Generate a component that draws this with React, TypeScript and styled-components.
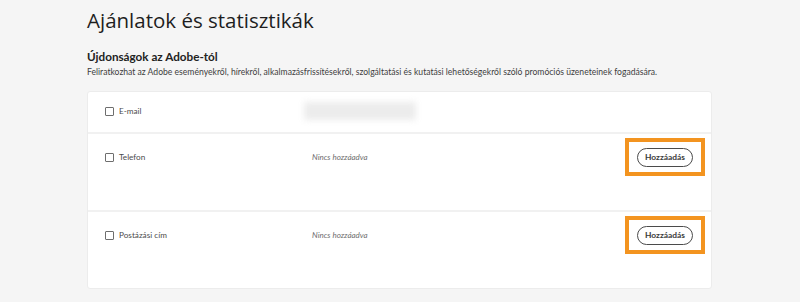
import styled, { createGlobalStyle } from 'styled-components';

const GlobalStyle = createGlobalStyle`
  html, body {
    margin: 0;
    padding: 0;
    background: #f5f5f5;
  }
  body {
    font-family: Lato, "Open Sans", sans-serif;
    color: #2c2c2c;
  }
`;

type Channel = {
  label: string;
  value?: string;
  hidden?: boolean;
  canAdd?: boolean;
};

const CHANNELS: Channel[] = [
  { label: 'E-mail', hidden: true },
  { label: 'Telefon', value: 'Nincs hozzáadva', canAdd: true },
  { label: 'Postázási cím', value: 'Nincs hozzáadva', canAdd: true },
];

export default function App() {
  return (
    <>
      <GlobalStyle />
      <Page>
        <Title>Ajánlatok és statisztikák</Title>
        <SectionTitle>Újdonságok az Adobe-tól</SectionTitle>
        <Description>
          Feliratkozhat az Adobe eseményekről, hírekről, alkalmazásfrissítésekről, szolgáltatási és
          kutatási lehetőségekről szóló promóciós üzeneteinek fogadására.
        </Description>
        <Card>
          {CHANNELS.map((channel) => (
            <Row key={channel.label} $tall={!!channel.canAdd}>
              <Label>
                <Checkbox type="checkbox" />
                <span>{channel.label}</span>
              </Label>
              {channel.hidden ? <Redacted /> : <Value>{channel.value}</Value>}
              {channel.canAdd ? (
                <Highlight>
                  <AddButton>Hozzáadás</AddButton>
                </Highlight>
              ) : (
                <span />
              )}
            </Row>
          ))}
        </Card>
      </Page>
    </>
  );
}

const Page = styled.div`
  padding: 3px 0 12px 87px;
  width: 625px;
`;

const Title = styled.h1`
  margin: 0;
  font-family: "Open Sans", "Noto Sans", sans-serif;
  font-size: 20.5px;
  line-height: 34px;
  font-weight: 500;
  color: #1e1e1e;
`;

const SectionTitle = styled.h2`
  margin: 12px 0 0;
  font-size: 11.7px;
  line-height: 15px;
  font-weight: 700;
  color: #222;
`;

const Description = styled.p`
  margin: 0;
  font-size: 8.6px;
  line-height: 16px;
  color: #3e3e3e;
  white-space: nowrap;
`;

const Card = styled.div`
  margin-top: 11px;
  background: #fff;
  border: 1px solid #ececec;
  border-radius: 3px;
  overflow: hidden;
`;

const Row = styled.div<{ $tall: boolean }>`
  display: grid;
  grid-template-columns: 207px 1fr auto;
  align-items: center;
  align-content: start;
  padding: ${(p) => (p.$tall ? '4px 6px 0 17px' : '0 6px 0 17px')};
  height: ${(p) => (p.$tall ? '72px' : '40px')};
  & + & {
    border-top: 2px solid #f1f1f1;
  }
`;

const Label = styled.label`
  display: flex;
  align-items: center;
  gap: 5px;
  font-size: 8.2px;
  color: #4b4b4b;
  min-height: 38px;
`;

const Checkbox = styled.input`
  appearance: none;
  margin: 0;
  width: 9px;
  height: 9px;
  border: 1.3px solid #6e6e6e;
  border-radius: 1px;
  background: #fff;
  box-sizing: border-box;
`;

const Value = styled.span`
  font-size: 8px;
  font-style: italic;
  color: #6e6e6e;
`;

const Redacted = styled.div`
  margin-left: -8px;
  width: 112px;
  height: 18px;
  background: #ececec;
  filter: blur(3px);
`;

const Highlight = styled.div`
  display: flex;
  align-items: center;
  justify-content: center;
  width: 72px;
  height: 30px;
  border: 4px solid #f39420;
`;

const AddButton = styled.button`
  height: 19px;
  padding: 0 7px;
  border: 1.2px solid #4b4b4b;
  border-radius: 10px;
  background: #fff;
  font-family: Lato, "Open Sans", sans-serif;
  font-size: 8.4px;
  font-weight: 700;
  color: #3a3a3a;
  line-height: 1;
`;
